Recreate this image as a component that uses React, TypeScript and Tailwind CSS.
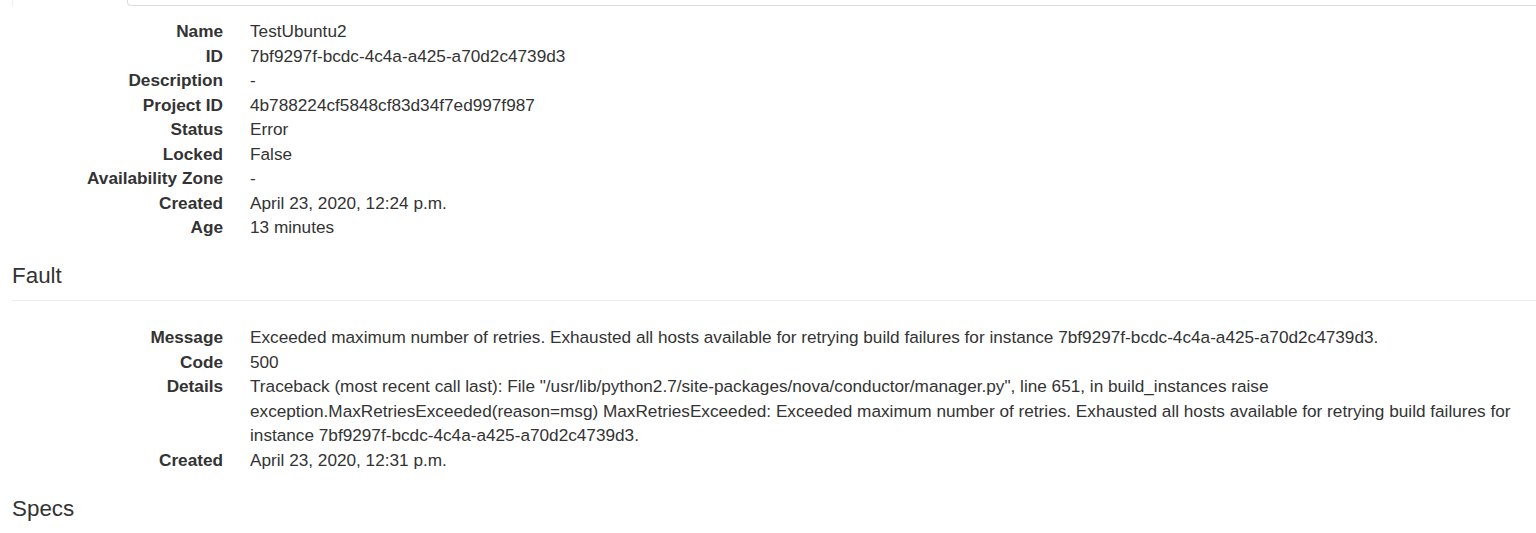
import React from "react";

const overview: [string, string][] = [
  ["Name", "TestUbuntu2"],
  ["ID", "7bf9297f-bcdc-4c4a-a425-a70d2c4739d3"],
  ["Description", "-"],
  ["Project ID", "4b788224cf5848cf83d34f7ed997f987"],
  ["Status", "Error"],
  ["Locked", "False"],
  ["Availability Zone", "-"],
  ["Created", "April 23, 2020, 12:24 p.m."],
  ["Age", "13 minutes"],
];

const Row = ({ label, children }: { label: string; children: React.ReactNode }) => (
  <>
    <dt className="text-right font-bold">{label}</dt>
    <dd>{children}</dd>
  </>
);

const App = () => {
  return (
    <div
      className="min-h-[533px] bg-white text-[#333] text-[17.2px] leading-[24.6px]"
      style={{ fontFamily: '"Liberation Sans", Arial, sans-serif' }}
    >
      <div className="flex h-[6px] pl-3">
        <div className="w-[115px] border-l border-[#eee]" />
        <div className="flex-1 border-l border-b border-[#ddd] rounded-bl-[4px]" />
      </div>

      <dl className="mt-[13px] grid grid-cols-[200px_1fr] gap-x-[27px] pl-[23px] pr-3 leading-[24.5px]">
        {overview.map(([k, v]) => (
          <Row key={k} label={k}>
            {v}
          </Row>
        ))}
      </dl>

      <h4 className="mt-[24.5px] pl-3 text-[22.4px] leading-[24px]">Fault</h4>
      <div className="mt-[12px] ml-3 border-t border-[#eee]" />

      <dl className="mt-[24px] grid grid-cols-[200px_1fr] gap-x-[27px] pl-[23px] pr-3">
        <Row label="Message">
          Exceeded maximum number of retries. Exhausted all hosts available for retrying build failures for instance
          7bf9297f-bcdc-4c4a-a425-a70d2c4739d3.
        </Row>
        <Row label="Code">500</Row>
        <Row label="Details">
          <span className="block whitespace-nowrap">
            Traceback (most recent call last): File "/usr/lib/python2.7/site-packages/nova/conductor/manager.py", line
            651, in build_instances raise
          </span>
          <span className="block whitespace-nowrap">
            exception.MaxRetriesExceeded(reason=msg) MaxRetriesExceeded: Exceeded maximum number of retries. Exhausted
            all hosts available for retrying build failures for
          </span>
          <span className="block whitespace-nowrap">instance 7bf9297f-bcdc-4c4a-a425-a70d2c4739d3.</span>
        </Row>
        <Row label="Created">April 23, 2020, 12:31 p.m.</Row>
      </dl>

      <h4 className="mt-[24.4px] pl-3 text-[22.4px] leading-[24px]">Specs</h4>
    </div>
  );
};

export default App;
